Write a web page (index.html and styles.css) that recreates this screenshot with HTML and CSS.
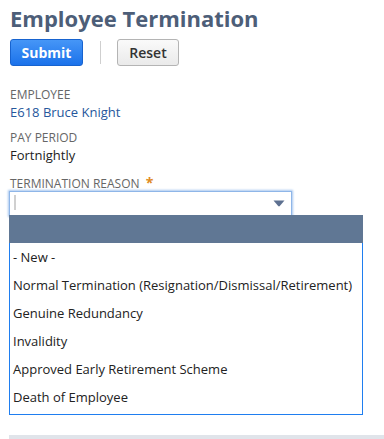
FILE: index.html
```html
<!DOCTYPE html>
<html lang="en">
<head>
    <meta charset="UTF-8">
    <meta name="viewport" content="width=device-width, initial-scale=1.0">
    <title>Employee Termination</title>
    <link rel="stylesheet" href="styles.css">
</head>
<body>
    <div class="page">
        <h1>Employee Termination</h1>
        <div class="actions">
            <button class="btn btn-primary" type="button">Submit</button>
            <span class="divider"></span>
            <button class="btn btn-secondary" type="button">Reset</button>
        </div>

        <div class="field first">
            <div class="field-label">Employee</div>
            <div class="field-value link">E618 Bruce Knight</div>
        </div>

        <div class="field">
            <div class="field-label">Pay Period</div>
            <div class="field-value">Fortnightly</div>
        </div>

        <div class="field reason">
            <div class="field-label">Termination Reason <span class="required">*</span></div>
            <div class="select-wrap">
                <div class="select">
                    <span class="caret"></span>
                    <svg class="arrow" width="12" height="7" viewBox="0 0 12 7">
                        <path d="M0.5 0.5 H11.5 L6.8 6 Q6 6.8 5.2 6 Z" fill="#5d7090"/>
                    </svg>
                </div>
                <ul class="dropdown">
                    <li class="dropdown-head"></li>
                    <li>- New -</li>
                    <li>Normal Termination (Resignation/Dismissal/Retirement)</li>
                    <li>Genuine Redundancy</li>
                    <li>Invalidity</li>
                    <li>Approved Early Retirement Scheme</li>
                    <li>Death of Employee</li>
                </ul>
            </div>
        </div>

        <div class="footer-bar"></div>
    </div>
</body>
</html>
```

FILE: styles.css
```css
body {
    margin: 0;
    font-family: "Open Sans", Arial, sans-serif;
    background-color: white;
    color: #222;
}
.page {
    padding-left: 10px;
}
h1 {
    margin: 3px 0 0 0;
    font-size: 22px;
    line-height: 30px;
    font-weight: bold;
    color: #4d5e78;
}
.actions {
    display: flex;
    align-items: center;
    margin-top: 6px;
}
.btn {
    height: 27px;
    border-radius: 3px;
    font-family: "Open Sans", Arial, sans-serif;
    font-size: 14px;
    font-weight: bold;
    padding: 0;
    box-sizing: border-box;
    cursor: pointer;
}
.btn-primary {
    width: 73px;
    color: white;
    border: 1px solid #1763cf;
    background: linear-gradient(#4696f7, #1b72ea);
}
.btn-secondary {
    width: 62px;
    color: #333;
    font-weight: 600;
    border: 1px solid #b4b4b4;
    background: linear-gradient(#fafafa, #eaeaea);
}
.divider {
    width: 1px;
    height: 23px;
    background-color: #cfcfcf;
    margin: 0 16px 0 17px;
}
.field {
    margin-top: 9px;
}
.field.first {
    margin-top: 21px;
}
.field.reason {
    margin-top: 11px;
}
.field-label {
    font-size: 12px;
    line-height: 16px;
    color: #666;
    text-transform: uppercase;
}
.required {
    color: #e08a1e;
    font-weight: bold;
    font-size: 14px;
    margin-left: 3px;
}
.field-value {
    font-size: 13px;
    line-height: 18px;
    color: #222;
}
.field-value.link {
    color: #26579c;
}
.select-wrap {
    position: relative;
    margin-top: -1px;
}
.select {
    position: relative;
    width: 281px;
    height: 23px;
    margin-left: -1px;
    border: 1px solid #8fb6e8;
    box-shadow: 0 0 2px 1px #a9c8ef;
    background-color: white;
}
.caret {
    position: absolute;
    left: 4px;
    top: 3px;
    width: 2px;
    height: 15px;
    background-color: #d0d0d0;
}
.arrow {
    position: absolute;
    right: 6px;
    top: 8px;
}
.dropdown {
    position: absolute;
    left: -1px;
    top: 24px;
    width: 352px;
    margin: 0;
    padding: 0 0 3px 0;
    list-style: none;
    border: 1px solid #1f7ef0;
    background-color: white;
}
.dropdown li {
    height: 28px;
    line-height: 29px;
    padding-left: 3px;
    font-size: 13px;
    color: #222;
    white-space: nowrap;
}
.dropdown li.dropdown-head {
    height: 28px;
    margin: -1px -1px 0 -1px;
    background-color: #607794;
}
.footer-bar {
    margin-top: 219px;
    margin-left: -1px;
    height: 10px;
    background-color: #e0e4ea;
}
```
